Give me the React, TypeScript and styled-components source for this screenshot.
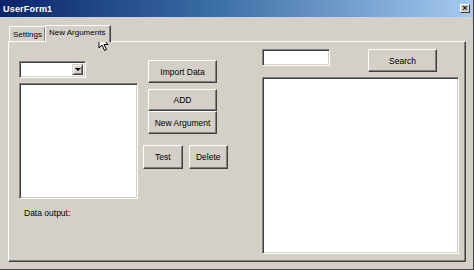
import styled, { createGlobalStyle } from "styled-components";

const GlobalStyle = createGlobalStyle`
  html, body {
    margin: 0;
    padding: 0;
    background: #d4d0c8;
  }
  body {
    font-family: "Liberation Sans", Arial, sans-serif;
    font-size: 8.5px;
    color: #000;
  }
`;

const Window = styled.div`
  position: relative;
  width: 474px;
  height: 270px;
  box-sizing: border-box;
  background: #d4d0c8;
  border-right: 1px solid #404040;
  border-bottom: 1px solid #404040;
  display: flex;
  flex-direction: column;
  overflow: hidden;
`;

const TitleBar = styled.div`
  height: 17px;
  flex-shrink: 0;
  display: flex;
  align-items: center;
  justify-content: space-between;
  padding: 0 2px 0 3px;
  background: linear-gradient(to right, #0a246a 0%, #3a6ea5 45%, #a6caf0 100%);
`;

const Title = styled.span`
  color: #fff;
  font-weight: bold;
  font-size: 9px;
  letter-spacing: 0.2px;
`;

const CloseButton = styled.div`
  width: 10px;
  height: 9px;
  box-sizing: border-box;
  background: #d4d0c8;
  border: 1px solid;
  border-color: #fff #404040 #404040 #fff;
  display: flex;
  align-items: center;
  justify-content: center;
  font-size: 9px;
  font-weight: bold;
  line-height: 1;
  margin-right: 1px;
`;

const Body = styled.div`
  flex: 1;
  display: flex;
  flex-direction: column;
  padding: 7px 8px 9px 8px;
`;

const TabStrip = styled.div`
  display: flex;
  align-items: flex-end;
  height: 17px;
  padding-left: 1px;
`;

const Tab = styled.div<{ $active?: boolean }>`
  box-sizing: border-box;
  font-size: 8px;
  height: ${(p) => (p.$active ? "17px" : "15px")};
  padding: 0 ${(p) => (p.$active ? "5px" : "3px")} 0 3px;
  display: flex;
  align-items: ${(p) => (p.$active ? "flex-start" : "center")};
  padding-top: ${(p) => (p.$active ? "2px" : "0")};
  background: #d4d0c8;
  border-top: 1px solid #fff;
  border-left: 1px solid #fff;
  border-right: 1px solid #404040;
  box-shadow: inset -1px 0 #808080;
  margin-bottom: ${(p) => (p.$active ? "-1px" : "0")};
  margin-left: ${(p) => (p.$active ? "-1px" : "0")};
  z-index: ${(p) => (p.$active ? 1 : 0)};
`;

const Panel = styled.div`
  flex: 1;
  width: 458px;
  box-sizing: border-box;
  border: 1px solid;
  border-color: #fff #404040 #404040 #fff;
  box-shadow: inset -1px -1px #808080;
  display: flex;
  padding: 7px 6px 7px 10px;
`;

const LeftColumn = styled.div`
  width: 119px;
  display: flex;
  flex-direction: column;
  padding-top: 12px;
`;

const MiddleColumn = styled.div`
  width: 85px;
  margin-left: 5px;
  display: flex;
  flex-direction: column;
  padding-top: 11px;
`;

const RightColumn = styled.div`
  width: 197px;
  margin-left: 34px;
  display: flex;
  flex-direction: column;
`;

const Sunken = styled.div`
  box-sizing: border-box;
  background: #fff;
  border: 1px solid;
  border-color: #808080 #fff #fff #808080;
  box-shadow: inset 1px 1px #404040, inset -1px -1px #d4d0c8;
`;

const Combo = styled(Sunken)`
  width: 67px;
  height: 17px;
  display: flex;
  justify-content: flex-end;
  padding: 2px;
`;

const ComboArrow = styled.div`
  width: 11px;
  height: 100%;
  box-sizing: border-box;
  background: #d4d0c8;
  border: 1px solid;
  border-color: #d4d0c8 #404040 #404040 #d4d0c8;
  box-shadow: inset 1px 1px #fff, inset -1px -1px #808080;
  display: flex;
  align-items: center;
  justify-content: center;
  &::after {
    content: "";
    border-left: 3px solid transparent;
    border-right: 3px solid transparent;
    border-top: 3px solid #000;
  }
`;

const ListBox = styled(Sunken)<{ $w: number; $h: number }>`
  width: ${(p) => p.$w}px;
  height: ${(p) => p.$h}px;
`;

const Label = styled.div`
  margin-top: 9px;
  padding-left: 5px;
`;

const Button = styled.div<{ $w: number; $h: number }>`
  box-sizing: border-box;
  width: ${(p) => p.$w}px;
  height: ${(p) => p.$h}px;
  background: #d4d0c8;
  border: 1px solid;
  border-color: #fff #404040 #404040 #fff;
  box-shadow: inset -1px -1px #808080;
  display: flex;
  align-items: center;
  justify-content: center;
  white-space: nowrap;
`;

const ButtonStack = styled.div`
  display: flex;
  flex-direction: column;
  padding-left: 5px;
  gap: 6px;
`;

const Pair = styled.div`
  display: flex;
  flex-direction: column;
`;

const ButtonRow = styled.div`
  display: flex;
  gap: 6px;
  margin-top: 11px;
`;

const SearchRow = styled.div`
  display: flex;
  align-items: flex-start;
  margin-bottom: 5px;
`;

const SearchBox = styled(Sunken)`
  width: 68px;
  height: 17px;
`;

const SearchButtonWrap = styled.div`
  margin-left: 38px;
`;

const Cursor = styled.svg`
  position: absolute;
  left: 98px;
  top: 34px;
`;

export default function App() {
  return (
    <>
      <GlobalStyle />
      <Window>
        <TitleBar>
          <Title>UserForm1</Title>
          <CloseButton>×</CloseButton>
        </TitleBar>
        <Body>
          <TabStrip>
            <Tab>Settings</Tab>
            <Tab $active>New Arguments</Tab>
          </TabStrip>
          <Panel>
            <LeftColumn>
              <Combo>
                <ComboArrow />
              </Combo>
              <ListBox $w={119} $h={116} style={{ marginTop: 5 }} />
              <Label>Data output:</Label>
            </LeftColumn>
            <MiddleColumn>
              <ButtonStack>
                <Button $w={69} $h={23}>Import Data</Button>
                <Pair>
                  <Button $w={69} $h={22}>ADD</Button>
                  <Button $w={69} $h={23}>New Argument</Button>
                </Pair>
              </ButtonStack>
              <ButtonRow>
                <Button $w={40} $h={24}>Test</Button>
                <Button $w={40} $h={24}>Delete</Button>
              </ButtonRow>
            </MiddleColumn>
            <RightColumn>
              <SearchRow>
                <SearchBox />
                <SearchButtonWrap>
                  <Button $w={69} $h={23}>Search</Button>
                </SearchButtonWrap>
              </SearchRow>
              <ListBox $w={197} $h={177} />
            </RightColumn>
          </Panel>
        </Body>
        <Cursor width="12" height="18" viewBox="0 0 12 18">
          <path
            d="M1 1 L1 14 L4 11 L6.5 16.5 L8.5 15.5 L6 10.5 L10 10.5 Z"
            fill="#fff"
            stroke="#000"
            strokeWidth="1"
            strokeLinejoin="round"
          />
        </Cursor>
      </Window>
    </>
  );
}
